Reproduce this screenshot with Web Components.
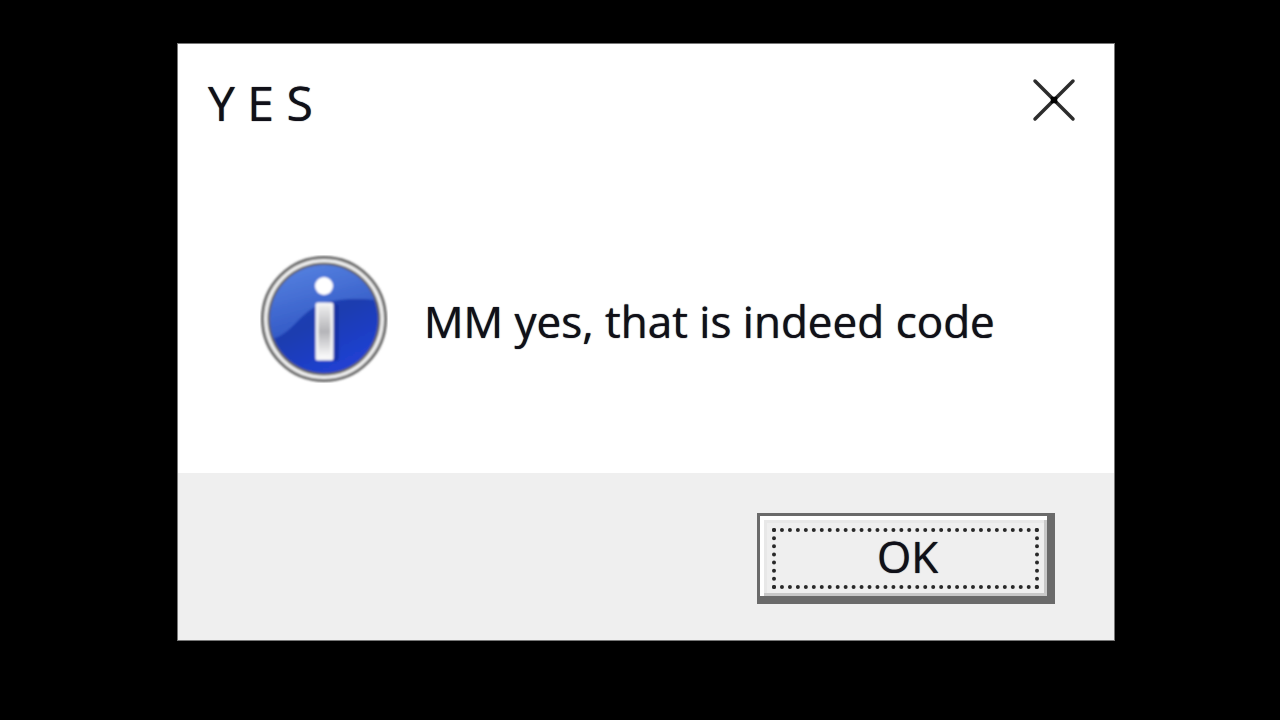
<!DOCTYPE html>
<html lang="en">
<head>
<meta charset="utf-8">
<title>Y E S</title>
<style>
body { margin: 0; background: #000; font-family: "Open Sans", "Noto Sans", sans-serif; color: #101018; }
main { box-sizing: border-box; min-height: 100vh; padding: 43px 165px 79px 177px; display: flex; }
</style>
</head>
<body>
<main>
  <message-dialog>
    <span slot="title">Y E S</span>
    <info-icon slot="icon"></info-icon>
    <span slot="message">MM yes, that is indeed code</span>
    <classic-button slot="actions">OK</classic-button>
  </message-dialog>
</main>

<template id="dialog-template">
  <style>
    :host { flex: 1; display: flex; flex-direction: column; box-sizing: border-box; background: #fff; border: 1px solid #777; text-shadow: 0 0 1px #101018; }
    header { display: flex; justify-content: space-between; align-items: flex-start; padding: 32px 36px 0 30px; }
    h1 { margin: 0; font-size: 48px; line-height: 54px; font-weight: 400; }
    .close { display: flex; margin: 0; padding: 0; border: 0; background: none; }
    .content { flex: 1; display: flex; align-items: center; gap: 36px; padding: 34px 32px 0 82px; }
    p { margin: 0; padding-top: 4px; font-size: 44px; line-height: 56px; white-space: nowrap; }
    footer { display: flex; justify-content: flex-end; padding: 40px 59px 36px; background: #efefef; }
  </style>
  <header>
    <h1><slot name="title"></slot></h1>
    <button class="close" type="button" aria-label="Close">
      <svg width="48" height="48" viewBox="0 0 48 48" fill="none" stroke="#2c2c2c" stroke-width="3.5" stroke-linecap="round">
        <path d="M5 5 43 43M43 5 5 43"/><rect x="22.5" y="22.5" width="3" height="3" fill="#000" stroke="#000"/>
      </svg>
    </button>
  </header>
  <div class="content"><slot name="icon"></slot><p><slot name="message"></slot></p></div>
  <footer><slot name="actions"></slot></footer>
</template>

<template id="icon-template">
  <style>:host { display: block; flex: none; } svg { display: block; }</style>
  <svg width="128" height="128" viewBox="0 0 128 128" role="img" aria-label="Information">
    <defs>
      <linearGradient id="base" x1="0" y1="0" x2=".5" y2="1"><stop offset="0" stop-color="#2450b8"/><stop offset=".6" stop-color="#1c3cb0"/><stop offset="1" stop-color="#2040d0"/></linearGradient>
      <linearGradient id="shine" x1=".2" y1="0" x2=".6" y2="1"><stop offset="0" stop-color="#5c88e4"/><stop offset="1" stop-color="#2a50c0"/></linearGradient>
      <linearGradient id="stem" x1="0" y1="0" x2="0" y2="1"><stop offset="0" stop-color="#f0f0f0"/><stop offset=".5" stop-color="#b4b4b8"/><stop offset="1" stop-color="#fff"/></linearGradient>
      <clipPath id="disc"><circle cx="64" cy="64" r="54"/></clipPath>
      <filter id="soft" x="-10%" y="-10%" width="120%" height="120%"><feGaussianBlur stdDeviation="1.1"/></filter>
    </defs>
    <g filter="url(#soft)">
      <circle cx="64" cy="64" r="61.5" fill="#f0f0f0" stroke="#666" stroke-width="3"/>
      <circle cx="64" cy="64" r="56.5" fill="#666"/>
      <circle cx="64" cy="64" r="54" fill="url(#base)"/>
      <path clip-path="url(#disc)" d="M0 0H128V47C100 42 72 43 55 52C38 61 30 80 12 84L0 86Z" fill="url(#shine)"/>
      <rect x="60" y="49" width="19" height="57" rx="3" fill="#142c98" opacity=".6"/>
      <rect x="57" y="49" width="15" height="55" rx="1" fill="url(#stem)" stroke="#f6f6f6" stroke-width="3"/>
      <circle cx="64" cy="31" r="9" fill="#fff"/>
    </g>
  </svg>
</template>

<template id="button-template">
  <style>
    :host { display: block; }
    button { display: block; box-sizing: border-box; width: 298px; height: 91px; margin: 0; padding: 12px 8px 7px 12px; border: solid #6a6a6a; border-width: 3px 8px 8px 3px; background: #efefef; box-shadow: inset 4px 4px 0 #fff, inset -3px -3px 0 #c8c8c8, inset 7px 7px 0 #e8e8e8; color: inherit; font-family: inherit; font-size: 44px; text-shadow: inherit; outline: 0; }
    .focus { display: block; box-sizing: border-box; height: 61px; padding-left: 4px; border: 4px dotted #292929; line-height: 48px; }
  </style>
  <button type="button"><span class="focus"><slot></slot></span></button>
</template>

<script>
const define = (name, id) => customElements.define(name, class extends HTMLElement {
  constructor() {
    super();
    this.attachShadow({ mode: "open" }).append(document.getElementById(id).content.cloneNode(true));
  }
});
define("message-dialog", "dialog-template");
define("info-icon", "icon-template");
define("classic-button", "button-template");
</script>
</body>
</html>
